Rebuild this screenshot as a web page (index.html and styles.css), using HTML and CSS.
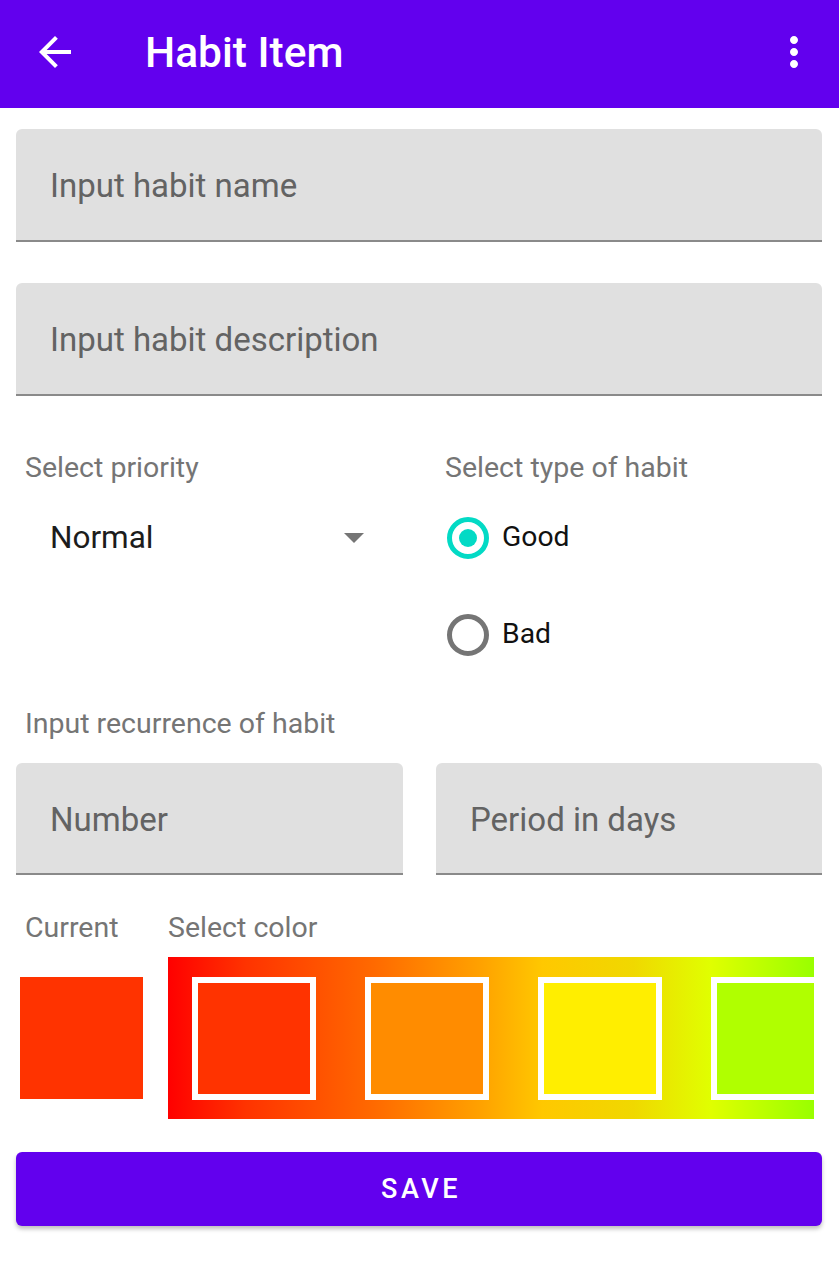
FILE: index.html
```html
<!DOCTYPE html>
<html lang="en">
<head>
<meta charset="utf-8">
<title>Habit Item</title>
<link rel="stylesheet" href="styles.css">
</head>
<body>
<header class="appbar">
  <svg class="appbar-icon back" viewBox="0 0 24 24" width="48" height="48"><path fill="#fff" d="M20 11H7.83l5.59-5.59L12 4l-8 8 8 8 1.41-1.41L7.83 13H20v-2z"/></svg>
  <h1 class="appbar-title">Habit Item</h1>
  <svg class="appbar-icon menu" viewBox="0 0 24 24" width="48" height="48"><path fill="#fff" d="M12 8c1.1 0 2-.9 2-2s-.9-2-2-2-2 .9-2 2 .9 2 2 2zm0 2c-1.1 0-2 .9-2 2s.9 2 2 2 2-.9 2-2-.9-2-2-2zm0 6c-1.1 0-2 .9-2 2s.9 2 2 2 2-.9 2-2-.9-2-2-2z"/></svg>
</header>

<main class="form">
  <div class="field field-name"><span class="placeholder">Input habit name</span></div>
  <div class="field field-desc"><span class="placeholder">Input habit description</span></div>

  <section class="two-col options">
    <div class="col">
      <div class="label option-label">Select priority</div>
      <div class="spinner">
        <span class="spinner-value">Normal</span>
        <span class="spinner-arrow"></span>
      </div>
    </div>
    <div class="col">
      <div class="label option-label">Select type of habit</div>
      <div class="radio checked"><span class="radio-circle"><span class="radio-dot"></span></span><span class="radio-text">Good</span></div>
      <div class="radio"><span class="radio-circle"></span><span class="radio-text">Bad</span></div>
    </div>
  </section>

  <div class="label recurrence-label">Input recurrence of habit</div>
  <section class="two-col recurrence">
    <div class="field field-small"><span class="placeholder">Number</span></div>
    <div class="field field-small"><span class="placeholder">Period in days</span></div>
  </section>

  <section class="colors">
    <div class="current-col">
      <div class="label">Current</div>
      <div class="current-swatch"></div>
    </div>
    <div class="select-col">
      <div class="label label-flush">Select color</div>
      <div class="palette">
        <div class="swatch" style="background:#ff3300"></div>
        <div class="swatch" style="background:#ff8c00"></div>
        <div class="swatch" style="background:#ffee00"></div>
        <div class="swatch" style="background:#b0ff00"></div>
      </div>
    </div>
  </section>

  <button class="save">SAVE</button>
</main>
</body>
</html>
```

FILE: styles.css
```css
* { box-sizing: border-box; }

body {
  margin: 0;
  width: 839px;
  background: #ffffff;
  font-family: Roboto, "Liberation Sans", Arial, sans-serif;
}

.appbar {
  height: 108px;
  background: #6200ee;
  display: flex;
  align-items: center;
  padding: 0 21px 0 31px;
}
.appbar-icon { flex: none; display: block; margin-top: -4px; }
.appbar-title {
  margin: -2px 0 0 66px;
  flex: 1;
  color: #ffffff;
  font-size: 42.5px;
  font-weight: 500;
  line-height: 1;
}

.form {
  padding: 21px 17px 40px 16px;
  display: flex;
  flex-direction: column;
}

.field {
  height: 113px;
  background: #e0e0e0;
  border-bottom: 2px solid #8a8a8a;
  border-radius: 6px 6px 0 0;
  display: flex;
  align-items: center;
  padding-left: 34px;
}
.field-desc { margin-top: 41px; }
.placeholder {
  color: #636363;
  font-size: 33px;
  line-height: 1;
  margin-top: 2px;
}

.label {
  color: #757575;
  font-size: 28.5px;
  height: 34px;
  line-height: 34px;
  padding-left: 9px;
}
.label-flush { padding-left: 0; }
.option-label { margin-bottom: 4px; }

.two-col {
  display: grid;
  grid-template-columns: 387px 386px;
  column-gap: 33px;
}
.options { margin-top: 55px; }

.spinner {
  height: 97px;
  display: flex;
  align-items: center;
  padding-left: 34px;
  padding-right: 39px;
}
.spinner-value {
  flex: 1;
  color: #1c1c1c;
  font-size: 31.5px;
  line-height: 1;
}
.spinner-arrow {
  width: 0;
  height: 0;
  border-left: 10px solid transparent;
  border-right: 10px solid transparent;
  border-top: 10px solid #757575;
}

.radio {
  height: 97px;
  display: flex;
  align-items: center;
  padding-left: 11px;
}
.radio-circle {
  width: 42px;
  height: 42px;
  border-radius: 50%;
  border: 5px solid #757575;
  display: flex;
  align-items: center;
  justify-content: center;
  flex: none;
}
.radio.checked .radio-circle { border-color: #03dac5; }
.radio-dot {
  width: 18px;
  height: 18px;
  border-radius: 50%;
  background: #03dac5;
}
.radio-text {
  margin-left: 13px;
  color: #111111;
  font-size: 28.3px;
  line-height: 1;
}

.recurrence-label { margin-top: 24px; }
.recurrence { margin-top: 22px; }
.field-small { height: 112px; }

.colors {
  margin-top: 36px;
  display: grid;
  grid-template-columns: 152px 646px;
}
.current-swatch {
  margin: 32px 0 0 4px;
  width: 123px;
  height: 122px;
  background: #ff3300;
}
.palette {
  margin-top: 12px;
  height: 162px;
  overflow: hidden;
  display: flex;
  align-items: flex-start;
  gap: 49px;
  padding: 20px 0 0 24px;
  background: linear-gradient(90deg, #ff0000 0%, #ff3300 12%, #ff6a00 32%, #ffa000 48%, #ffc800 58%, #f0d800 72%, #e0ff00 84%, #99ff00 100%);
}
.swatch {
  flex: none;
  width: 124px;
  height: 123px;
  border: 6px solid #ffffff;
}

.save {
  margin-top: 33px;
  height: 74px;
  border: 0;
  border-radius: 6px;
  background: #6200ee;
  color: #ffffff;
  font-family: Roboto, "Liberation Sans", Arial, sans-serif;
  font-size: 27px;
  font-weight: 500;
  letter-spacing: 3.5px;
  padding-left: 10px;
  box-shadow: 0 3px 4px rgba(0,0,0,0.25);
}
```
